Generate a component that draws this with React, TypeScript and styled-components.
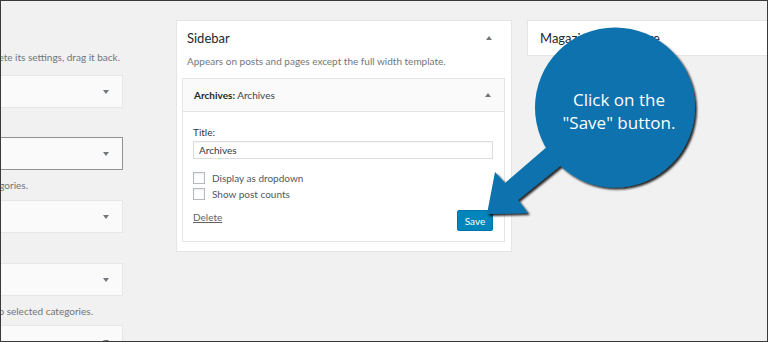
import React from "react";
import styled, { createGlobalStyle } from "styled-components";

const GlobalStyle = createGlobalStyle`
  * { box-sizing: border-box; }
  body {
    margin: 0;
    background: #f1f1f1;
    font-family: Lato, "Noto Sans", sans-serif;
  }
`;

const Frame = styled.div`
  position: relative;
  width: 768px;
  height: 342px;
  border: 1px solid #3a3a3a;
  background: #f1f1f1;
  overflow: hidden;
`;

const Columns = styled.div`
  display: flex;
  align-items: flex-start;
`;

const LeftColumn = styled.div`
  flex: none;
  width: 300px;
  margin-left: -178px;
  padding-top: 48px;
  display: flex;
  flex-direction: column;
`;

const Desc = styled.div<{ $right: number; $h: number }>`
  height: ${(p) => p.$h}px;
  display: flex;
  align-items: center;
  justify-content: flex-end;
  padding-right: ${(p) => p.$right}px;
  white-space: nowrap;
  font-size: 10px;
  color: #6f7479;
`;

const WidgetCard = styled.div<{ $active?: boolean }>`
  height: 33px;
  display: flex;
  align-items: center;
  justify-content: flex-end;
  padding-right: 13px;
  background: #fafafa;
  border: 1px solid ${(p) => (p.$active ? "#8f9398" : "#e6e6e6")};
`;

const Caret = styled.span<{ $up?: boolean }>`
  display: block;
  width: 0;
  height: 0;
  border-left: 3.5px solid transparent;
  border-right: 3.5px solid transparent;
  ${(p) =>
    p.$up
      ? "border-bottom: 4px solid #72777c;"
      : "border-top: 4px solid #72777c;"}
`;

const SidebarPanel = styled.div`
  flex: none;
  width: 336px;
  margin: 19px 0 0 53px;
  padding: 7px 6px 9px 5px;
  background: #fff;
  border: 1px solid #e5e5e5;
`;

const PanelHead = styled.div`
  height: 20px;
  display: flex;
  align-items: center;
  justify-content: space-between;
  padding: 0 13px 0 5px;
`;

const PanelTitle = styled.h2`
  margin: 0;
  font-size: 13px;
  font-weight: 400;
  color: #23282d;
`;

const PanelDesc = styled.p`
  margin: 5px 0 9px;
  padding-left: 5px;
  height: 16px;
  line-height: 16px;
  font-size: 10px;
  color: #72777c;
`;

const Widget = styled.div`
  border: 1px solid #e5e5e5;
`;

const WidgetHead = styled.div`
  height: 33px;
  display: flex;
  align-items: center;
  justify-content: space-between;
  padding: 0 13px 0 11px;
  background: #fafafa;
  border-bottom: 1px solid #e5e5e5;
  font-size: 10px;
  font-weight: 700;
  color: #23282d;
`;

const WidgetHeadSub = styled.span`
  font-weight: 400;
  color: #3c434a;
`;

const WidgetBody = styled.div`
  padding: 12px 11px 10px 10px;
  background: #fff;
  display: flex;
  flex-direction: column;
`;

const FieldLabel = styled.label`
  height: 16px;
  line-height: 16px;
  font-size: 10px;
  color: #32373c;
`;

const TextInput = styled.input`
  margin-top: 1px;
  height: 18px;
  width: 100%;
  padding: 0 5px;
  border: 1px solid #dddddd;
  box-shadow: inset 0 1px 2px rgba(0, 0, 0, 0.05);
  font-family: inherit;
  font-size: 10px;
  color: #32373c;
  outline: none;
`;

const CheckList = styled.div`
  margin-top: 13px;
  display: flex;
  flex-direction: column;
  gap: 4px;
`;

const CheckRow = styled.label`
  display: flex;
  align-items: center;
  gap: 7px;
  height: 12px;
  font-size: 10px;
  color: #50575e;
`;

const Box = styled.span`
  width: 12px;
  height: 12px;
  border: 1px solid #b4b9be;
  background: #fff;
  box-shadow: inset 0 1px 2px rgba(0, 0, 0, 0.08);
`;

const ActionRow = styled.div`
  margin-top: 10px;
  display: flex;
  align-items: flex-start;
  justify-content: space-between;
`;

const DeleteLink = styled.a`
  line-height: 14px;
  font-size: 10px;
  color: #5f6368;
  text-decoration: underline;
`;

const SaveButton = styled.button`
  width: 36px;
  height: 21px;
  padding: 0;
  border: 1px solid #0073aa;
  border-radius: 2px;
  background: #0085ba;
  color: #fff;
  font-family: inherit;
  font-size: 10px;
`;

const ClosedPanel = styled.div`
  flex: 1;
  height: 36px;
  margin: 19px 0 0 15px;
  padding-left: 12px;
  display: flex;
  align-items: center;
  background: #fff;
  border: 1px solid #e5e5e5;
  border-right: none;
`;

const Overlay = styled.svg`
  position: absolute;
  top: -1px;
  left: -1px;
  width: 768px;
  height: 342px;
  pointer-events: none;
`;

const CalloutText = styled.div`
  position: absolute;
  top: 87px;
  left: 537px;
  width: 162px;
  text-align: center;
  font-family: "Open Sans", "Noto Sans", sans-serif;
  font-size: 17px;
  line-height: 23px;
  color: #fff;
`;

const leftItems = [
  { text: "", right: 0, h: 29 },
  { text: "A list or dropdown of categories.", right: 95, h: 30 },
  { text: "", right: 0, h: 30 },
  { text: "Displays posts from one or two selected categories.", right: 30, h: 29 },
];

export default function App() {
  const blue = "#0872ad";
  return (
    <>
      <GlobalStyle />
      <Frame>
        <Columns>
          <LeftColumn>
            <Desc $right={3} $h={16} style={{ marginBottom: 10 }}>
              To deactivate a widget and delete its settings, drag it back.
            </Desc>
            {leftItems.map((item, i) => (
              <React.Fragment key={i}>
                <WidgetCard $active={i === 1}>
                  <Caret />
                </WidgetCard>
                <Desc $right={item.right} $h={item.h}>
                  {item.text}
                </Desc>
              </React.Fragment>
            ))}
            <WidgetCard>
              <Caret />
            </WidgetCard>
          </LeftColumn>

          <SidebarPanel>
            <PanelHead>
              <PanelTitle>Sidebar</PanelTitle>
              <Caret $up />
            </PanelHead>
            <PanelDesc>Appears on posts and pages except the full width template.</PanelDesc>
            <Widget>
              <WidgetHead>
                <span>
                  Archives:<WidgetHeadSub> Archives</WidgetHeadSub>
                </span>
                <Caret $up />
              </WidgetHead>
              <WidgetBody>
                <FieldLabel>Title:</FieldLabel>
                <TextInput defaultValue="Archives" />
                <CheckList>
                  <CheckRow>
                    <Box />
                    Display as dropdown
                  </CheckRow>
                  <CheckRow>
                    <Box />
                    Show post counts
                  </CheckRow>
                </CheckList>
                <ActionRow>
                  <DeleteLink>Delete</DeleteLink>
                  <SaveButton>Save</SaveButton>
                </ActionRow>
              </WidgetBody>
            </Widget>
          </SidebarPanel>

          <ClosedPanel>
            <PanelTitle>Magazine Homepage</PanelTitle>
          </ClosedPanel>
        </Columns>

        <Overlay viewBox="0 0 768 342">
          <defs>
            <filter id="callout-shadow" x="-20%" y="-20%" width="140%" height="140%">
              <feDropShadow dx="2" dy="2" stdDeviation="1" floodColor="#000" floodOpacity="0.85" />
            </filter>
          </defs>
          <g filter="url(#callout-shadow)" fill={blue}>
            <circle cx="615" cy="107.5" r="80" />
            <polygon points="487,214 495,172 505,183 578,120 595,138 518,200 528,213" />
          </g>
        </Overlay>
        <CalloutText>
          Click on the
          <br />
          "Save" button.
        </CalloutText>
      </Frame>
    </>
  );
}
